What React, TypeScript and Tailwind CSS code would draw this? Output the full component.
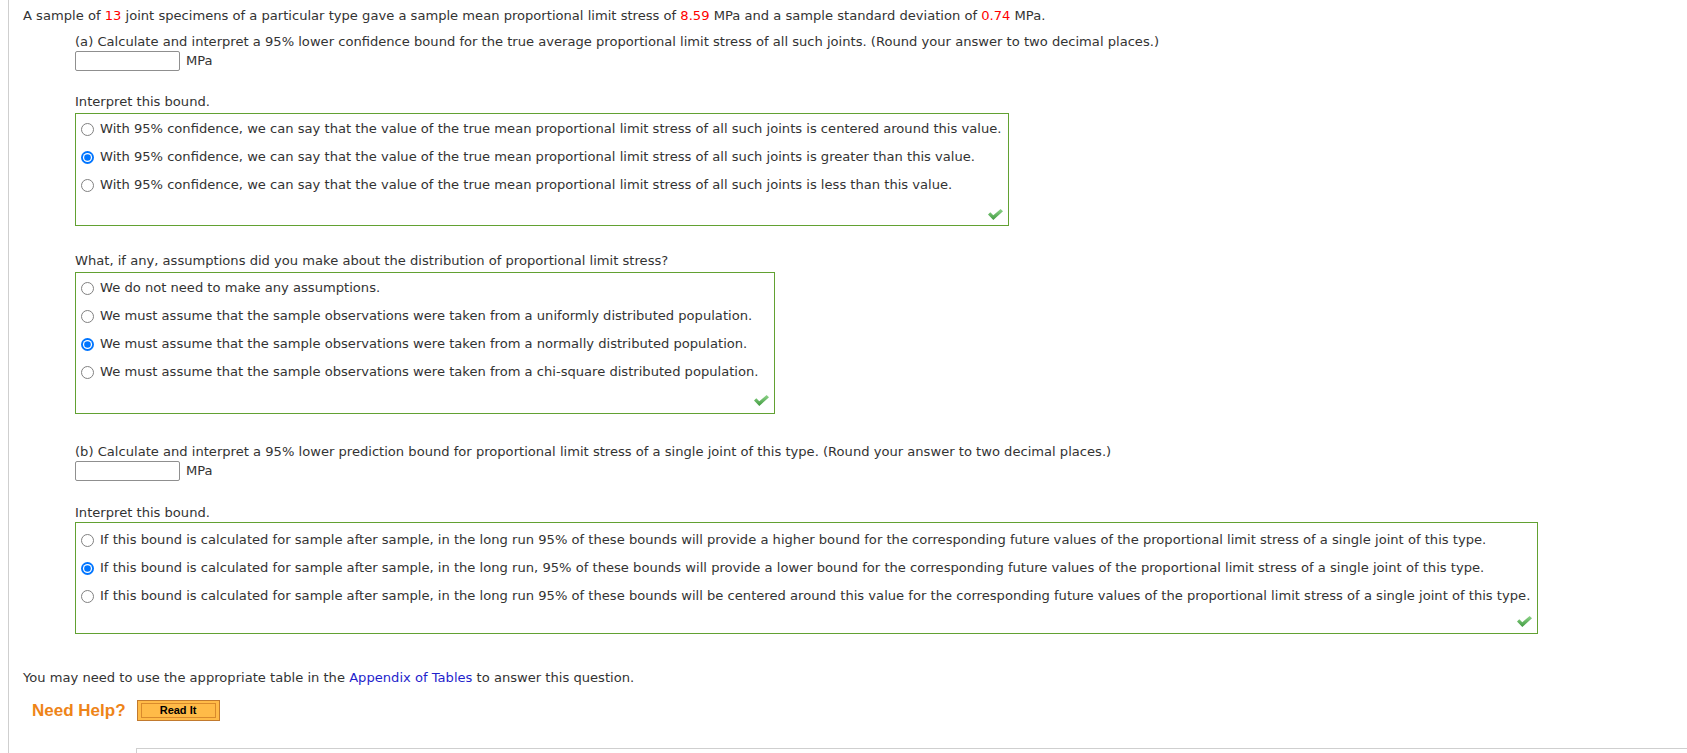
import React from 'react';

type Choice = { text: string; selected?: boolean };

const Radio: React.FC<{ checked?: boolean }> = ({ checked }) => (
  <svg width="13" height="13" viewBox="0 0 13 13" className="shrink-0">
    {checked ? (
      <>
        <circle cx="6.5" cy="6.5" r="6.5" fill="#0075ff" />
        <circle cx="6.5" cy="6.5" r="4.6" fill="#fff" />
        <circle cx="6.5" cy="6.5" r="3.3" fill="#0075ff" />
      </>
    ) : (
      <circle cx="6.5" cy="6.5" r="6" fill="#fff" stroke="#808080" strokeWidth="1" />
    )}
  </svg>
);

const Check = () => (
  <svg width="15" height="11" viewBox="0 0 15 11">
    <defs>
      <linearGradient id="chk" x1="0" y1="0" x2="0" y2="1">
        <stop offset="0" stopColor="#8fd48a" />
        <stop offset="1" stopColor="#3f9a3f" />
      </linearGradient>
    </defs>
    <polygon points="0,5.5 2.3,3.3 5.3,6.2 12.6,0 15,2.2 5.3,11" fill="url(#chk)" />
  </svg>
);

const ChoiceBox: React.FC<{ choices: Choice[]; width: string; bottom: string; top?: string; size?: string }> = ({
  choices,
  width,
  bottom,
  top = 'pt-px',
  size = '',
}) => (
  <div className={`border border-[#62a132] ${width} ${top}`}>
    {choices.map((c, i) => (
      <div key={i} className="flex h-[28px] items-center whitespace-nowrap pl-[5px]">
        <Radio checked={c.selected} />
        <span className={`ml-[6px] ${size}`}>{c.text}</span>
      </div>
    ))}
    <div className={`flex justify-end pr-[5px] ${bottom}`}>
      <Check />
    </div>
  </div>
);

const AnswerInput = () => (
  <div className="flex items-center">
    <div className="h-[20px] w-[105px] rounded-[2px] border border-[#8f8f8f] bg-white" />
    <span className="ml-[6px]">MPa</span>
  </div>
);

export default function App() {
  return (
    <div className="h-screen overflow-hidden bg-white pl-2 font-['DejaVu_Sans',Verdana,sans-serif] text-[13.1px] text-[#333]">
      <div className="min-h-screen border-l border-[#cfcfcf] pl-[14px] pt-[6px]">
        <p className="leading-5">
          A sample of <span className="text-[#f00]">13</span> joint specimens of a particular type gave a sample mean
          proportional limit stress of <span className="text-[#f00]">8.59</span> MPa and a sample standard deviation of{' '}
          <span className="text-[#f00]">0.74</span> MPa.
        </p>

        <div className="ml-[52px]">
          <p className="mt-[7px] leading-[18px]">
            (a) Calculate and interpret a 95% lower confidence bound for the true average proportional limit stress of
            all such joints. (Round your answer to two decimal places.)
          </p>
          <AnswerInput />
          <p className="mt-[22px] leading-[18px]">Interpret this bound.</p>
          <div className="mt-[2px]">
            <ChoiceBox
              width="w-[934px]"
              bottom="pt-[10px] pb-[5px]"
              choices={[
                {
                  text: 'With 95% confidence, we can say that the value of the true mean proportional limit stress of all such joints is centered around this value.',
                },
                {
                  text: 'With 95% confidence, we can say that the value of the true mean proportional limit stress of all such joints is greater than this value.',
                  selected: true,
                },
                {
                  text: 'With 95% confidence, we can say that the value of the true mean proportional limit stress of all such joints is less than this value.',
                },
              ]}
            />
          </div>

          <p className="mt-[26px] leading-[18px]">
            What, if any, assumptions did you make about the distribution of proportional limit stress?
          </p>
          <div className="mt-[2px]">
            <ChoiceBox
              width="w-[700px]"
              bottom="pt-[9px] pb-[7px]"
              choices={[
                { text: 'We do not need to make any assumptions.' },
                { text: 'We must assume that the sample observations were taken from a uniformly distributed population.' },
                {
                  text: 'We must assume that the sample observations were taken from a normally distributed population.',
                  selected: true,
                },
                { text: 'We must assume that the sample observations were taken from a chi-square distributed population.' },
              ]}
            />
          </div>

          <p className="mt-[29px] leading-[18px]">
            (b) Calculate and interpret a 95% lower prediction bound for proportional limit stress of a single joint of
            this type. (Round your answer to two decimal places.)
          </p>
          <AnswerInput />
          <p className="mt-[23px] leading-[18px]">Interpret this bound.</p>
          <div>
            <ChoiceBox
              width="w-[1463px]"
              top="pt-[3px]"
              size="text-[13.12px]"
              bottom="pt-[6px] pb-[6px]"
              choices={[
                {
                  text: 'If this bound is calculated for sample after sample, in the long run 95% of these bounds will provide a higher bound for the corresponding future values of the proportional limit stress of a single joint of this type.',
                },
                {
                  text: 'If this bound is calculated for sample after sample, in the long run, 95% of these bounds will provide a lower bound for the corresponding future values of the proportional limit stress of a single joint of this type.',
                  selected: true,
                },
                {
                  text: 'If this bound is calculated for sample after sample, in the long run 95% of these bounds will be centered around this value for the corresponding future values of the proportional limit stress of a single joint of this type.',
                },
              ]}
            />
          </div>
        </div>

        <p className="mt-[35px] leading-[18px]">
          You may need to use the appropriate table in the{' '}
          <span className="text-[#1f1fcc]">Appendix of Tables</span> to answer this question.
        </p>

        <div className="mt-[11px] flex items-center pl-[9px]">
          <span className="font-['Liberation_Sans',Arial,sans-serif] text-[17px] font-bold text-[#ee8418]">
            Need Help?
          </span>
          <div className="ml-[11px] h-[21px] w-[83px] border border-[#c27a2e] bg-[#ffbb48] p-[2px_3px]">
            <div className="flex h-full items-center justify-center border border-[#d98a2c] font-['Liberation_Sans',Arial,sans-serif] text-[11px] font-bold leading-none text-black">
              Read It
            </div>
          </div>
        </div>

        <div className="ml-[113px] mt-[24px] h-[40px] border-l border-t border-[#cfcfcf]" />
      </div>
    </div>
  );
}
